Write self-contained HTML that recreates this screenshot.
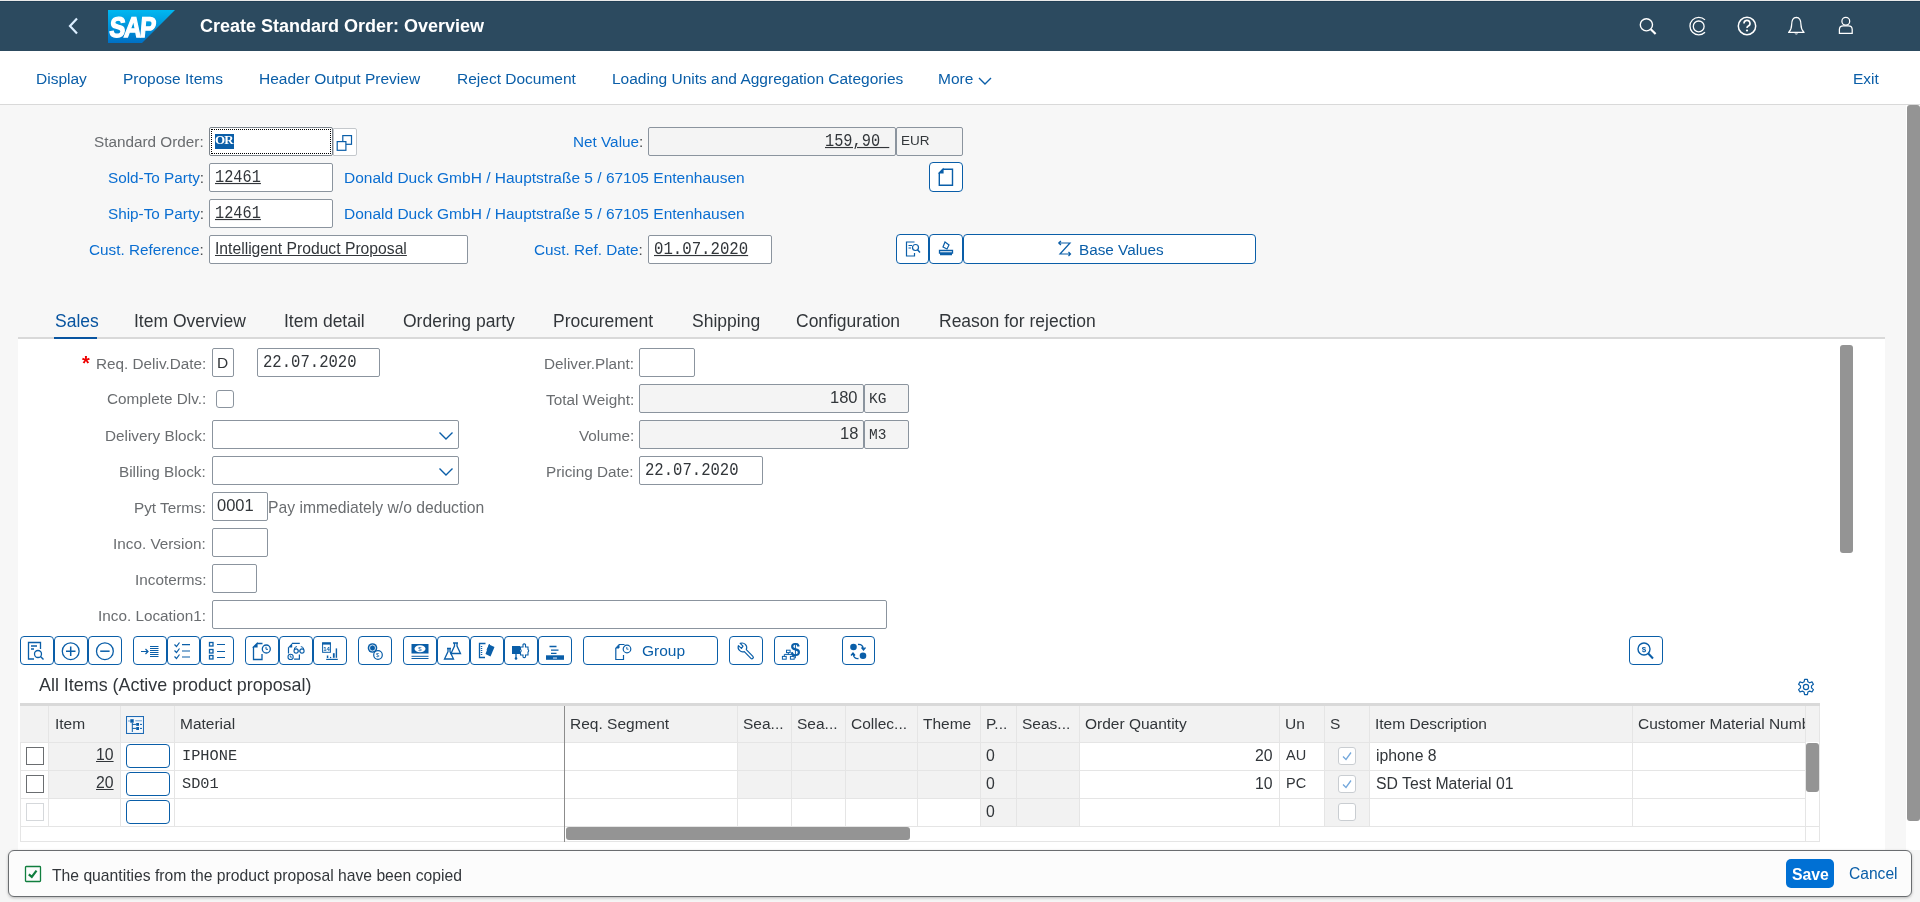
<!DOCTYPE html>
<html><head><meta charset="utf-8">
<style>
*{box-sizing:border-box;margin:0;padding:0}
html,body{width:1920px;height:902px;overflow:hidden;background:#f7f7f7;font-family:"Liberation Sans",sans-serif;color:#32363a}
.a{position:absolute}
#hdr{left:0;top:0;width:1920px;height:51px;background:#2c4a5f;border-top:1px solid #eaeaea;box-shadow:inset 0 1px 0 #223f55}
#title{left:200px;top:16px;font-size:18px;font-weight:bold;color:#fff;white-space:nowrap}
#menu{left:0;top:51px;width:1920px;height:54px;background:#fff;border-bottom:1px solid #d9d9d9}
.mi{top:70px;font-size:15.5px;color:#0a5ea8;white-space:nowrap}
.lbl{font-size:15.3px;white-space:nowrap;text-align:right}
.g{color:#6a6d70}
.bl{color:#0a6ed1}
.inp{background:#fff;border:1px solid #8b949e;border-radius:2px}
.ro{background:#f4f4f4}
.mono{font-family:"Liberation Mono",monospace;transform:scaleY(1.14);transform-origin:0 0}
.btn{background:#fff;border:1px solid #0a5ea8;border-radius:4px}
.tab{top:311px;font-size:17.5px;color:#32363a;white-space:nowrap}
.txt{white-space:nowrap}
.th{top:715px;font-size:15.5px;color:#32363a;white-space:nowrap}
.td{font-size:15.8px;color:#32363a;white-space:nowrap}
.cb{width:18px;height:18px;background:#fff;border:1px solid #6a6d70}
.scb{width:18px;height:18px;background:#fff;border:1px solid #c9cdd1;border-radius:3px}
.binp{width:44px;height:24px;background:#fff;border:1.5px solid #0a5ea8;border-radius:4px}
.a{will-change:transform}</style></head><body>
<!-- header -->
<div id="hdr" class="a"></div>
<svg class="a" style="left:66px;top:17px" width="16" height="18" viewBox="0 0 16 18"><path d="M11 1.5 L4 9 L11 16.5" fill="none" stroke="#dbeeff" stroke-width="2.2"/></svg>
<svg class="a" style="left:108px;top:10px" width="67" height="33" viewBox="0 0 67 33">
<defs><linearGradient id="sapg" x1="0" y1="0" x2="0" y2="1"><stop offset="0" stop-color="#00b8f1"/><stop offset="1" stop-color="#0070c4"/></linearGradient></defs>
<path d="M0 0 H67 L34 33 H0 Z" fill="url(#sapg)"/>
<g transform="translate(0.8,26.8) scale(0.84,1) skewX(-6)"><text x="0" y="0" font-family="Liberation Sans" font-weight="bold" font-size="28.5" fill="#fff" stroke="#fff" stroke-width="1.3" letter-spacing="-1.6">SAP</text></g>
</svg>
<div id="title" class="a">Create Standard Order: Overview</div>
<!-- shell icons -->
<svg class="a" style="left:1637px;top:16px" width="24" height="22" viewBox="0 0 24 22"><circle cx="9.4" cy="8.8" r="6.1" fill="none" stroke="#fff" stroke-width="1.4"/><path d="M13.8 13.2 L18.6 18" stroke="#fff" stroke-width="2.2"/></svg>
<svg class="a" style="left:1686px;top:15px" width="24" height="22" viewBox="0 0 24 22"><path d="M19 4.9 A8.8 8.8 0 1 0 19 17.3" fill="none" stroke="#fff" stroke-width="1.3"/><circle cx="12.7" cy="11.4" r="5.4" fill="none" stroke="#fff" stroke-width="1.3"/></svg>
<svg class="a" style="left:1736px;top:15px" width="22" height="22" viewBox="0 0 22 22"><circle cx="11" cy="11" r="8.7" fill="none" stroke="#fff" stroke-width="1.5"/><path d="M8 8.5 A3 3 0 1 1 12 11.2 Q11 11.8 11 13" fill="none" stroke="#fff" stroke-width="1.6"/><circle cx="11" cy="15.5" r="1.1" fill="#fff"/></svg>
<svg class="a" style="left:1785px;top:15px" width="22" height="22" viewBox="0 0 22 22"><path d="M3.6 17.4 Q6.6 14.5 6.6 10 Q6.6 2.6 11.3 2.4 Q16 2.6 16 10 Q16 14.5 19.1 17.4 Z" fill="none" stroke="#fff" stroke-width="1.25" stroke-linejoin="round"/><path d="M9.4 18.4 Q11.3 20.6 13.2 18.4 Z" fill="#fff"/></svg>
<svg class="a" style="left:1835px;top:15px" width="22" height="22" viewBox="0 0 22 22"><circle cx="10.8" cy="6.2" r="3.9" fill="none" stroke="#fff" stroke-width="1.25"/><path d="M4.4 18.3 V14.6 Q4.4 10.9 8.2 10.9 H13.4 Q17.2 10.9 17.2 14.6 V18.3 Z" fill="none" stroke="#fff" stroke-width="1.25"/></svg>

<!-- menu -->
<div id="menu" class="a"></div>
<div class="a mi" style="left:36px">Display</div>
<div class="a mi" style="left:123px">Propose Items</div>
<div class="a mi" style="left:259px">Header Output Preview</div>
<div class="a mi" style="left:457px">Reject Document</div>
<div class="a mi" style="left:612px">Loading Units and Aggregation Categories</div>
<div class="a mi" style="left:938px">More</div>
<svg class="a" style="left:977px;top:75px" width="16" height="12" viewBox="0 0 16 12"><path d="M2 3 L8 9 L14 3" fill="none" stroke="#0a5ea8" stroke-width="1.4"/></svg>
<div class="a mi" style="left:1853px">Exit</div>

<!-- header form -->
<div class="a lbl g" style="right:1716px;top:133px">Standard Order:</div>
<div class="a inp" style="left:209px;top:127px;width:124px;height:29px;border-color:#7c848c"></div>
<div class="a" style="left:211px;top:129px;width:120px;height:25px;border:1px dotted #000"></div>
<div class="a" style="left:215px;top:134px;width:19px;height:15px;background:#0a5ea8"></div>
<div class="a txt" style="left:215px;top:132px;font-size:13px;color:#fff;font-family:'Liberation Serif',serif;font-weight:bold;letter-spacing:-0.8px">OR</div>
<div class="a inp" style="left:333px;top:128px;width:24px;height:28px;border-color:#c4c8cc;border-radius:0 2px 2px 0"></div>
<svg class="a" style="left:336px;top:133px" width="18" height="18" viewBox="0 0 18 18"><rect x="6.8" y="2.6" width="8.7" height="8.7" fill="none" stroke="#0a5ea8" stroke-width="1.2"/><rect x="1.2" y="8.6" width="8.7" height="8.7" fill="#fff" stroke="#0a5ea8" stroke-width="1.2"/></svg>

<div class="a lbl bl" style="right:1716px;top:169px">Sold-To Party<span style="color:#4a4d50">:</span></div>
<div class="a inp" style="left:209px;top:163px;width:124px;height:29px"></div>
<div class="a mono txt" style="left:215px;top:167px;font-size:15.3px;text-decoration:underline;color:#32363a">12461</div>
<div class="a txt bl" style="left:344px;top:169px;font-size:15.5px">Donald Duck GmbH / Hauptstraße 5 / 67105 Entenhausen</div>
<div class="a lbl bl" style="right:1716px;top:205px">Ship-To Party<span style="color:#4a4d50">:</span></div>
<div class="a inp" style="left:209px;top:199px;width:124px;height:29px"></div>
<div class="a mono txt" style="left:215px;top:203px;font-size:15.3px;text-decoration:underline;color:#32363a">12461</div>
<div class="a txt bl" style="left:344px;top:205px;font-size:15.5px">Donald Duck GmbH / Hauptstraße 5 / 67105 Entenhausen</div>
<div class="a lbl bl" style="right:1716px;top:241px">Cust. Reference<span style="color:#4a4d50">:</span></div>
<div class="a inp" style="left:209px;top:235px;width:259px;height:29px"></div>
<div class="a txt" style="left:215px;top:240px;font-size:15.7px;text-decoration:underline;color:#32363a">Intelligent Product Proposal</div>

<div class="a lbl bl" style="right:1277px;top:133px">Net Value<span style="color:#4a4d50">:</span></div>
<div class="a inp ro" style="left:648px;top:127px;width:248px;height:29px"></div>
<div class="a mono txt" style="right:1031px;top:131px;font-size:15.3px;text-decoration:underline;color:#32363a">159,90&nbsp;</div>
<div class="a inp ro" style="left:896px;top:127px;width:67px;height:29px"></div>
<div class="a txt" style="left:901px;top:133px;font-size:13.5px;color:#32363a">EUR</div>
<div class="a btn" style="left:929px;top:162px;width:34px;height:30px"></div>
<svg class="a" style="left:936px;top:166px" width="20" height="22" viewBox="0 0 20 22"><path d="M7 3.2 H16.5 V19.3 H3.3 V7 Z" fill="none" stroke="#0a5ea8" stroke-width="1.4"/><path d="M3.3 7 L7 3.2 V7 Z" fill="#0a5ea8" stroke="#0a5ea8" stroke-width="1.2"/></svg>

<div class="a lbl bl" style="right:1277px;top:241px">Cust. Ref. Date<span style="color:#4a4d50">:</span></div>
<div class="a inp" style="left:648px;top:235px;width:124px;height:29px"></div>
<div class="a mono txt" style="left:653.5px;top:239px;font-size:15.7px;text-decoration:underline;color:#32363a">01.07.2020</div>
<div class="a btn" style="left:896px;top:234px;width:33px;height:30px"></div>
<svg class="a" style="left:902px;top:239px" width="22" height="20" viewBox="0 0 22 20"><path d="M12.5 3 H4.5 V17 H12.5 V14" fill="none" stroke="#0a5ea8" stroke-width="1.2"/><path d="M6.5 6.5 H10 M6.5 9 H9" stroke="#0a5ea8" stroke-width="1.2"/><circle cx="13.5" cy="8.5" r="3" fill="none" stroke="#0a5ea8" stroke-width="1.2"/><path d="M15.5 10.8 L18 13.5" stroke="#0a5ea8" stroke-width="1.4"/></svg>
<div class="a btn" style="left:929px;top:234px;width:34px;height:30px"></div>
<svg class="a" style="left:936px;top:239px" width="20" height="20" viewBox="0 0 20 20"><path d="M9 3 L13 6 L11 10 L7 8 Z" fill="none" stroke="#0a5ea8" stroke-width="1.2"/><path d="M3.5 11.5 H16.5 V14 H3.5 Z M4 15.5 H16" fill="none" stroke="#0a5ea8" stroke-width="1.3"/></svg>
<div class="a btn" style="left:963px;top:234px;width:293px;height:30px"></div>
<svg class="a" style="left:1057px;top:240px" width="16" height="18" viewBox="0 0 16 18"><path d="M1.5 3 L4 1 M1.5 3 L4 5 M1.5 3 H13 L3 14 H13.5 M11.5 12 L13.5 14 L11.5 16" fill="none" stroke="#0a5ea8" stroke-width="1.2"/></svg>
<div class="a txt" style="left:1078.5px;top:241px;font-size:15.3px;color:#0a5ea8">Base Values</div>

<!-- outer scrollbar -->
<div class="a" style="left:1906px;top:105px;width:14px;height:745px;background:#fff"></div>
<div class="a" style="left:1907px;top:105px;width:13px;height:716px;background:#949494;border-radius:3px 3px 3px 3px"></div>
<!-- tabs -->
<div class="a" style="left:18px;top:337px;width:1867px;height:2px;background:#d9d9d9"></div>
<div class="a" style="left:54px;top:337px;width:43px;height:2px;background:#0854a0"></div>
<div class="a tab" style="left:54.7px;color:#0854a0">Sales</div>
<div class="a tab" style="left:133.9px">Item Overview</div>
<div class="a tab" style="left:283.8px">Item detail</div>
<div class="a tab" style="left:403.2px">Ordering party</div>
<div class="a tab" style="left:553.3px">Procurement</div>
<div class="a tab" style="left:691.5px">Shipping</div>
<div class="a tab" style="left:796.2px">Configuration</div>
<div class="a tab" style="left:938.9px">Reason for rejection</div>
<!-- panel -->
<div class="a" style="left:18px;top:339px;width:1867px;height:511px;background:#fff"></div>
<!-- inner scrollbar -->
<div class="a" style="left:1840px;top:345px;width:13px;height:208px;background:#949494;border-radius:3px"></div>

<!-- sales form left -->
<div class="a txt" style="left:82px;top:352px;font-size:20px;color:#e00;font-weight:bold">*</div>
<div class="a lbl g" style="right:1714px;top:355px">Req. Deliv.Date:</div>
<div class="a inp" style="left:212px;top:348px;width:22px;height:29px"></div>
<div class="a txt" style="left:217px;top:354px;font-size:15.5px;color:#32363a">D</div>
<div class="a inp" style="left:257px;top:348px;width:123px;height:29px"></div>
<div class="a mono txt" style="left:262.5px;top:352px;font-size:15.6px;color:#32363a">22.07.2020</div>
<div class="a lbl g" style="right:1714px;top:390px">Complete Dlv.:</div>
<div class="a inp" style="left:216px;top:390px;width:18px;height:18px;border-radius:3px"></div>
<div class="a lbl g" style="right:1714px;top:427px">Delivery Block:</div>
<div class="a inp" style="left:212px;top:420px;width:247px;height:29px"></div>
<svg class="a" style="left:438px;top:431px" width="16" height="10" viewBox="0 0 16 10"><path d="M1.5 1.5 L8 8 L14.5 1.5" fill="none" stroke="#0a5ea8" stroke-width="1.4"/></svg>
<div class="a lbl g" style="right:1714px;top:463px">Billing Block:</div>
<div class="a inp" style="left:212px;top:456px;width:247px;height:29px"></div>
<svg class="a" style="left:438px;top:467px" width="16" height="10" viewBox="0 0 16 10"><path d="M1.5 1.5 L8 8 L14.5 1.5" fill="none" stroke="#0a5ea8" stroke-width="1.4"/></svg>
<div class="a lbl g" style="right:1714px;top:499px">Pyt Terms:</div>
<div class="a inp" style="left:212px;top:492px;width:56px;height:29px"></div>
<div class="a txt" style="left:217px;top:496px;font-size:16.5px;color:#32363a">0001</div>
<div class="a txt g" style="left:268px;top:499px;font-size:15.7px">Pay immediately w/o deduction</div>
<div class="a lbl g" style="right:1714px;top:535px">Inco. Version:</div>
<div class="a inp" style="left:212px;top:528px;width:56px;height:29px"></div>
<div class="a lbl g" style="right:1714px;top:571px">Incoterms:</div>
<div class="a inp" style="left:212px;top:564px;width:45px;height:29px"></div>
<div class="a lbl g" style="right:1714px;top:607px">Inco. Location1:</div>
<div class="a inp" style="left:212px;top:600px;width:675px;height:29px"></div>

<!-- sales form right -->
<div class="a lbl g" style="right:1286px;top:355px">Deliver.Plant:</div>
<div class="a inp" style="left:639px;top:348px;width:56px;height:29px"></div>
<div class="a lbl g" style="right:1286px;top:391px">Total Weight:</div>
<div class="a inp ro" style="left:639px;top:384px;width:225px;height:29px"></div>
<div class="a txt" style="right:1062px;top:388px;font-size:16.5px;color:#32363a">180</div>
<div class="a inp ro" style="left:864px;top:384px;width:45px;height:29px"></div>
<div class="a txt" style="left:869px;top:391px;font-size:14.5px;color:#32363a;font-family:'Liberation Mono',monospace">KG</div>
<div class="a lbl g" style="right:1286px;top:427px">Volume:</div>
<div class="a inp ro" style="left:639px;top:420px;width:225px;height:29px"></div>
<div class="a txt" style="right:1062px;top:424px;font-size:16.5px;color:#32363a">18</div>
<div class="a inp ro" style="left:864px;top:420px;width:45px;height:29px"></div>
<div class="a txt" style="left:869px;top:427px;font-size:14.5px;color:#32363a;font-family:'Liberation Mono',monospace">M3</div>
<div class="a lbl g" style="right:1286px;top:463px">Pricing Date:</div>
<div class="a inp" style="left:639px;top:456px;width:124px;height:29px"></div>
<div class="a mono txt" style="left:644.5px;top:460px;font-size:15.6px;color:#32363a">22.07.2020</div>

<!-- toolbar -->
<div class="a btn" style="left:20px;top:636px;width:34px;height:29px"></div>
<svg class="a" style="left:20px;top:636px" width="34" height="29" viewBox="0 0 34 29"><path d="M20.5 13 V6.5 H8.5 V23 H14" fill="none" stroke="#0a5ea8" stroke-width="1.3"/><path d="M11 10 H17 M11 13 H14" stroke="#0a5ea8" stroke-width="1.3"/><circle cx="18" cy="18" r="3.5" fill="none" stroke="#0a5ea8" stroke-width="1.3"/><path d="M20.5 20.5 L23.5 23.5" stroke="#0a5ea8" stroke-width="1.4"/></svg>
<div class="a btn" style="left:54px;top:636px;width:34px;height:29px"></div>
<svg class="a" style="left:54px;top:636px" width="34" height="29" viewBox="0 0 34 29"><circle cx="16.7" cy="15.2" r="8.4" fill="none" stroke="#0a5ea8" stroke-width="1.3"/><path d="M16.7 10.5 V20 M12 15.2 H21.5" stroke="#0a5ea8" stroke-width="1.5"/></svg>
<div class="a btn" style="left:88px;top:636px;width:34px;height:29px"></div>
<svg class="a" style="left:88px;top:636px" width="34" height="29" viewBox="0 0 34 29"><circle cx="16.9" cy="15.2" r="8.4" fill="none" stroke="#0a5ea8" stroke-width="1.3"/><path d="M12.2 15.2 H21.6" stroke="#0a5ea8" stroke-width="1.5"/></svg>

<div class="a btn" style="left:133px;top:636px;width:34px;height:29px"></div>
<svg class="a" style="left:133px;top:636px" width="34" height="29" viewBox="0 0 34 29"><path d="M8 15.5 H15 M12.5 13 L15 15.5 L12.5 18" fill="none" stroke="#0a5ea8" stroke-width="1.2"/><path d="M17 10.5 H25.5 M17 12.5 H25.5 M17 14.5 H25.5 M17 16.5 H25.5 M17 18.5 H25.5 M17 20.5 H25.5" stroke="#0a5ea8" stroke-width="1.1"/></svg>
<div class="a btn" style="left:167px;top:636px;width:33px;height:29px"></div>
<svg class="a" style="left:167px;top:636px" width="33" height="29" viewBox="0 0 33 29"><path d="M7.5 8.5 L9.5 10.5 L12.5 6.5 M7.5 14.5 L9.5 16.5 L12.5 12.5 M7.5 20.5 L9.5 22.5 L12.5 18.5" fill="none" stroke="#0a5ea8" stroke-width="1.2"/><path d="M15 8.7 H23 M15 15 H23 M15 21 H23" stroke="#0a5ea8" stroke-width="1.2"/></svg>
<div class="a btn" style="left:200px;top:636px;width:34px;height:29px"></div>
<svg class="a" style="left:200px;top:636px" width="34" height="29" viewBox="0 0 34 29"><rect x="9.5" y="6.5" width="3.5" height="3.5" fill="none" stroke="#0a5ea8" stroke-width="1.3"/><rect x="9.5" y="13.5" width="3.5" height="3.5" fill="none" stroke="#0a5ea8" stroke-width="1.3"/><rect x="9.5" y="19.5" width="3.5" height="3.5" fill="none" stroke="#0a5ea8" stroke-width="1.3"/><path d="M17 8.5 H25 M17 15.5 H25 M17 21.5 H25" stroke="#0a5ea8" stroke-width="1.2"/></svg>

<div class="a btn" style="left:245px;top:636px;width:34px;height:29px"></div>
<svg class="a" style="left:245px;top:636px" width="34" height="29" viewBox="0 0 34 29"><path d="M12 7.5 H17.5 M8.5 11 V23.5 H17 V18" fill="none" stroke="#0a5ea8" stroke-width="1.3"/><path d="M8.5 11 L12 7.5 V11 Z" fill="#0a5ea8" stroke="#0a5ea8" stroke-width="1.2"/><circle cx="21.3" cy="13" r="4" fill="none" stroke="#0a5ea8" stroke-width="1.3"/><path d="M21 10.8 V13.3 H23" fill="none" stroke="#0a5ea8" stroke-width="1"/></svg>
<div class="a btn" style="left:279px;top:636px;width:34px;height:29px"></div>
<svg class="a" style="left:279px;top:636px" width="34" height="29" viewBox="0 0 34 29"><path d="M13 7.4 H20.8 M9.5 11.2 V17.6 M20.4 18.4 V23.2 H15.1" fill="none" stroke="#0a5ea8" stroke-width="1.2"/><path d="M9 11.6 L13.2 7 V11.6 Z" fill="#0a5ea8"/><circle cx="17.1" cy="15" r="2.1" fill="none" stroke="#0a5ea8" stroke-width="1.1"/><circle cx="23" cy="15" r="2.1" fill="none" stroke="#0a5ea8" stroke-width="1.1"/><path d="M19.2 15 H20.9 M15.2 13.2 Q15.6 10.6 18 10.6 M21.8 10.6 Q24.3 10.6 24.8 13.2" fill="none" stroke="#0a5ea8" stroke-width="1"/><circle cx="11.6" cy="20.9" r="2.6" fill="none" stroke="#0a5ea8" stroke-width="1.1"/><path d="M11.3 19.4 V21.1 H12.9" fill="none" stroke="#0a5ea8" stroke-width="0.9"/></svg>
<div class="a btn" style="left:313px;top:636px;width:34px;height:29px"></div>
<svg class="a" style="left:313px;top:636px" width="34" height="29" viewBox="0 0 34 29"><rect x="9.6" y="7" width="7.8" height="9.3" fill="none" stroke="#0a5ea8" stroke-width="1"/><rect x="9.1" y="6.4" width="8.8" height="2.2" fill="#0a5ea8"/><text x="10.2" y="14.8" font-family="Liberation Sans" font-size="6" font-weight="bold" fill="#0a5ea8">14</text><path d="M13.2 23.4 H24.8" stroke="#0a5ea8" stroke-width="1.2"/><rect x="13.8" y="19.5" width="1.5" height="2.5" fill="#0a5ea8"/><circle cx="17.6" cy="21.5" r="0.7" fill="#0a5ea8"/><rect x="19.9" y="17.2" width="1.8" height="4.6" fill="#0a5ea8"/><rect x="22.7" y="12.4" width="1.4" height="9.4" fill="#0a5ea8"/></svg>
<div class="a btn" style="left:358px;top:636px;width:34px;height:29px"></div>
<svg class="a" style="left:358px;top:636px" width="34" height="29" viewBox="0 0 34 29"><circle cx="14.5" cy="12" r="4.8" fill="#0a5ea8"/><circle cx="14.5" cy="12" r="3" fill="none" stroke="#fff" stroke-width="0.8"/><circle cx="20" cy="19" r="4.3" fill="#fff" stroke="#0a5ea8" stroke-width="1.2"/><text x="18.1" y="21.3" font-family="Liberation Sans" font-size="6" fill="#0a5ea8">$</text></svg>

<div class="a btn" style="left:403px;top:636px;width:34px;height:29px"></div>
<svg class="a" style="left:403px;top:636px" width="34" height="29" viewBox="0 0 34 29"><rect x="8.5" y="8" width="17" height="9.5" fill="#0a5ea8"/><ellipse cx="17" cy="12.7" rx="5.5" ry="3.5" fill="#fff"/><text x="15.3" y="15" font-family="Liberation Sans" font-size="6" fill="#0a5ea8">$</text><path d="M8.5 20.3 H25.5 M8.5 22.5 H25.5" stroke="#0a5ea8" stroke-width="1"/></svg>
<div class="a btn" style="left:437px;top:636px;width:33px;height:29px"></div>
<svg class="a" style="left:437px;top:636px" width="33" height="29" viewBox="0 0 33 29"><path d="M10 12.5 H14 M11 12.5 V15.5 L7.5 23 H16.5 L13 15.5 V12.5" fill="none" stroke="#0a5ea8" stroke-width="1.3"/><path d="M16 7 H21 M17.5 7 V10 L14 17.5 H23.5 L20 10 V7" fill="none" stroke="#0a5ea8" stroke-width="1.3"/></svg>
<div class="a btn" style="left:470px;top:636px;width:34px;height:29px"></div>
<svg class="a" style="left:470px;top:636px" width="34" height="29" viewBox="0 0 34 29"><path d="M15.5 7.5 H9.5 V21.5 H15" fill="none" stroke="#0a5ea8" stroke-width="1.3"/><path d="M11.5 10 V19" stroke="#0a5ea8" stroke-width="1.5" stroke-dasharray="1 1"/><path d="M19 8.5 L24.5 11 L20.5 20.5 L15.5 18 Z" fill="#0a5ea8"/><path d="M17 14 L19.5 8" stroke="#0a5ea8" stroke-width="1"/></svg>
<div class="a btn" style="left:504px;top:636px;width:34px;height:29px"></div>
<svg class="a" style="left:504px;top:636px" width="34" height="29" viewBox="0 0 34 29"><rect x="8" y="10" width="8" height="8" fill="#0a5ea8"/><path d="M12 18 V22" stroke="#0a5ea8" stroke-width="1.3"/><circle cx="12" cy="22.5" r="1.3" fill="#0a5ea8"/><path d="M16.5 11 H19 V8.5 A1.5 1.5 0 0 1 21.5 8.5 V11 H24 V13.5 A1.5 1.5 0 0 1 24 16 V19 H21.5 V21 A1.5 1.5 0 0 1 19 21 V19 H16.5 V16 A1.5 1.5 0 0 0 16.5 13.5 Z" fill="none" stroke="#0a5ea8" stroke-width="1.1"/></svg>
<div class="a btn" style="left:538px;top:636px;width:34px;height:29px"></div>
<svg class="a" style="left:538px;top:636px" width="34" height="29" viewBox="0 0 34 29"><path d="M11.5 10.5 H18.5 M13 14.2 H20.5 M13 17.3 H18.5" stroke="#0a5ea8" stroke-width="1.3"/><rect x="8" y="19.3" width="18" height="4.5" fill="#0a5ea8"/><rect x="15" y="21.3" width="4" height="1.5" fill="#9bbce0"/></svg>

<div class="a btn" style="left:583px;top:636px;width:135px;height:29px"></div>
<svg class="a" style="left:612px;top:642px" width="22" height="22" viewBox="0 0 22 22"><path d="M7 2.5 H12.5 M3.8 6 V17.5 H11.5 V13" fill="none" stroke="#0a5ea8" stroke-width="1.2"/><path d="M3.8 6 L7 2.5 V6 Z" fill="#0a5ea8" stroke="#0a5ea8" stroke-width="1"/><circle cx="15" cy="7" r="3.8" fill="#fff" stroke="#0a5ea8" stroke-width="1.2"/><path d="M14.8 5 V7.2 H16.5" fill="none" stroke="#0a5ea8" stroke-width="0.9"/></svg>
<div class="a txt" style="left:642px;top:642px;font-size:15.5px;color:#0a5ea8">Group</div>
<div class="a btn" style="left:729px;top:636px;width:34px;height:29px"></div>
<svg class="a" style="left:729px;top:636px" width="34" height="29" viewBox="0 0 34 29"><path d="M11.2 7.4 L14 10.2 L12.4 12.4 L9.4 9.6 A4.7 4.7 0 0 0 15.3 15.6 L21.9 22.3 A1.4 1.4 0 0 0 23.9 20.3 L17.3 13.6 A4.7 4.7 0 0 0 11.2 7.4 Z" fill="none" stroke="#0a5ea8" stroke-width="1.2" stroke-linejoin="round"/></svg>
<div class="a btn" style="left:774px;top:636px;width:34px;height:29px"></div>
<svg class="a" style="left:774px;top:636px" width="34" height="29" viewBox="0 0 34 29"><text x="16.6" y="19.6" font-family="Liberation Sans" font-weight="bold" font-size="17.5" fill="#0a5ea8">$</text><rect x="12.5" y="14.2" width="3.6" height="2.4" fill="none" stroke="#0a5ea8" stroke-width="1"/><path d="M14.3 16.6 V18.4 M10.3 20.4 V18.4 H18.3 V20.4" fill="none" stroke="#0a5ea8" stroke-width="1"/><rect x="8.4" y="20.4" width="3.8" height="2.8" fill="none" stroke="#0a5ea8" stroke-width="1"/><rect x="16.4" y="20.4" width="3.8" height="2.8" fill="none" stroke="#0a5ea8" stroke-width="1"/></svg>
<div class="a btn" style="left:842px;top:636px;width:33px;height:29px"></div>
<svg class="a" style="left:842px;top:636px" width="33" height="29" viewBox="0 0 33 29"><circle cx="11.5" cy="11" r="3.3" fill="#0a5ea8"/><circle cx="21" cy="19.8" r="3.3" fill="#0a5ea8"/><path d="M16 8.5 Q21 8 21.5 13.5 M19.5 11.5 L21.5 14 L23.5 11.5" fill="none" stroke="#0a5ea8" stroke-width="1.3"/><path d="M16.5 22.5 Q11.5 23 11 17.5 M9 19.5 L11 17 L13 19.5" fill="none" stroke="#0a5ea8" stroke-width="1.3"/></svg>

<div class="a btn" style="left:1629px;top:636px;width:34px;height:29px"></div>
<svg class="a" style="left:1629px;top:636px" width="34" height="29" viewBox="0 0 34 29"><circle cx="15" cy="13" r="6" fill="none" stroke="#0a5ea8" stroke-width="1.4"/><text x="12.7" y="16" font-family="Liberation Sans" font-weight="bold" font-size="8" fill="#0a5ea8">$</text><path d="M19.3 17.5 L24 22.5" stroke="#0a5ea8" stroke-width="2"/></svg>
<div class="a txt" style="left:38.5px;top:675px;font-size:17.9px;color:#32363a">All Items (Active product proposal)</div>
<svg class="a" style="left:1796px;top:677px" width="20" height="20" viewBox="0 0 20 20"><path d="M8.6 1.8 H11.4 L11.9 4.2 L13.7 5.2 L16 4.3 L17.4 6.7 L15.5 8.3 V10.3 L17.4 12 L16 14.4 L13.7 13.5 L11.9 14.5 L11.4 17 H8.6 L8.1 14.5 L6.3 13.5 L4 14.4 L2.6 12 L4.5 10.3 V8.3 L2.6 6.7 L4 4.3 L6.3 5.2 L8.1 4.2 Z" fill="none" stroke="#0a5ea8" stroke-width="1.2" stroke-linejoin="round" transform="translate(0,0.6)"/><circle cx="10" cy="10" r="2.6" fill="none" stroke="#0a5ea8" stroke-width="1.2"/></svg>

<!-- table -->
<div class="a" style="left:20px;top:703px;width:1800px;height:3px;background:#d9d9d9"></div>
<div class="a" style="left:20px;top:706px;width:1800px;height:136px;background:#fff;border-left:1px solid #e5e5e5;border-bottom:1px solid #e5e5e5;border-right:1px solid #e5e5e5"></div>
<div class="a" style="left:20px;top:706px;width:1799px;height:36px;background:#f2f2f2"></div>
<!-- gray cells -->
<div class="a" style="left:48px;top:742px;width:72px;height:56px;background:#f2f2f2"></div>
<div class="a" style="left:737px;top:742px;width:243px;height:56px;background:#f2f2f2"></div>
<div class="a" style="left:980px;top:742px;width:99px;height:84px;background:#f2f2f2"></div>
<div class="a" style="left:1324px;top:742px;width:45px;height:84px;background:#f2f2f2"></div>
<!-- horizontal row lines -->
<div class="a" style="left:20px;top:742px;width:1785px;height:1px;background:#e5e5e5"></div>
<div class="a" style="left:20px;top:770px;width:1785px;height:1px;background:#e5e5e5"></div>
<div class="a" style="left:20px;top:798px;width:1785px;height:1px;background:#e5e5e5"></div>
<div class="a" style="left:20px;top:826px;width:1800px;height:1px;background:#e5e5e5"></div>
<!-- vertical col lines -->
<div class="a" style="left:48px;top:706px;width:1px;height:120px;background:#e5e5e5"></div>
<div class="a" style="left:120px;top:706px;width:1px;height:120px;background:#e5e5e5"></div>
<div class="a" style="left:174px;top:706px;width:1px;height:120px;background:#e5e5e5"></div>
<div class="a" style="left:564px;top:706px;width:1px;height:136px;background:#8c8c8c"></div>
<div class="a" style="left:737px;top:706px;width:1px;height:120px;background:#e5e5e5"></div>
<div class="a" style="left:791px;top:706px;width:1px;height:120px;background:#e5e5e5"></div>
<div class="a" style="left:845px;top:706px;width:1px;height:120px;background:#e5e5e5"></div>
<div class="a" style="left:917px;top:706px;width:1px;height:120px;background:#e5e5e5"></div>
<div class="a" style="left:980px;top:706px;width:1px;height:120px;background:#e5e5e5"></div>
<div class="a" style="left:1016px;top:706px;width:1px;height:120px;background:#e5e5e5"></div>
<div class="a" style="left:1079px;top:706px;width:1px;height:120px;background:#e5e5e5"></div>
<div class="a" style="left:1279px;top:706px;width:1px;height:120px;background:#e5e5e5"></div>
<div class="a" style="left:1324px;top:706px;width:1px;height:120px;background:#e5e5e5"></div>
<div class="a" style="left:1369px;top:706px;width:1px;height:120px;background:#e5e5e5"></div>
<div class="a" style="left:1632px;top:706px;width:1px;height:120px;background:#e5e5e5"></div>
<div class="a" style="left:1805px;top:706px;width:1px;height:136px;background:#e5e5e5"></div>
<!-- header texts -->
<div class="a th" style="left:54.7px">Item</div>
<svg class="a" style="left:126px;top:716px" width="18" height="18" viewBox="0 0 18 18"><rect x="0.5" y="0.5" width="17" height="17" fill="#f4f8fc" stroke="#1f6bb5" stroke-width="1.1"/><path d="M2 5 H4.5 M9.3 4.8 H16" stroke="#6a9fd2" stroke-width="1"/><rect x="4.3" y="3.2" width="3.4" height="3.5" fill="#0a5ea8"/><path d="M6.3 6.7 V16 M6.3 8.4 H10.2 M6.3 12.4 H10.2 M14 8.4 H16 M14 12.4 H16" fill="none" stroke="#0a5ea8" stroke-width="1"/><rect x="10.2" y="7" width="2.8" height="2.8" fill="#0a5ea8"/><rect x="10.2" y="11" width="2.8" height="3" fill="#0a5ea8"/></svg>
<div class="a th" style="left:180.4px">Material</div>
<div class="a th" style="left:570.3px">Req. Segment</div>
<div class="a th" style="left:743px">Sea...</div>
<div class="a th" style="left:797.2px">Sea...</div>
<div class="a th" style="left:851px">Collec...</div>
<div class="a th" style="left:923.4px">Theme</div>
<div class="a th" style="left:986px">P...</div>
<div class="a th" style="left:1022px">Seas...</div>
<div class="a th" style="left:1085px">Order Quantity</div>
<div class="a th" style="left:1285px">Un</div>
<div class="a th" style="left:1330px">S</div>
<div class="a th" style="left:1375.2px">Item Description</div>
<div class="a" style="left:1638px;top:706px;width:167px;height:36px;overflow:hidden"><div class="th" style="position:absolute;left:0;top:9px">Customer Material Number</div></div>
<!-- rows -->
<div class="a cb" style="left:26px;top:747px"></div>
<div class="a cb" style="left:26px;top:775px"></div>
<div class="a cb" style="left:26px;top:803px;border-color:#d5d8db"></div>
<div class="a td" style="right:1806px;top:745.5px;text-decoration:underline">10</div>
<div class="a td" style="right:1806px;top:773.5px;text-decoration:underline">20</div>
<div class="a binp" style="left:126px;top:744px"></div>
<div class="a binp" style="left:126px;top:772px"></div>
<div class="a binp" style="left:126px;top:800px"></div>
<div class="a txt" style="left:181.5px;top:747px;font-size:15.3px;color:#32363a;font-family:'Liberation Mono',monospace">IPHONE</div>
<div class="a txt" style="left:181.5px;top:775px;font-size:15.3px;color:#32363a;font-family:'Liberation Mono',monospace">SD01</div>
<div class="a td" style="left:986px;top:746.5px">0</div>
<div class="a td" style="left:986px;top:774.5px">0</div>
<div class="a td" style="left:986px;top:802.5px">0</div>
<div class="a td" style="right:647px;top:746.5px">20</div>
<div class="a td" style="right:647px;top:774.5px">10</div>
<div class="a txt" style="left:1286px;top:747px;font-size:14.5px;color:#32363a">AU</div>
<div class="a txt" style="left:1286px;top:775px;font-size:14.5px;color:#32363a">PC</div>
<div class="a scb" style="left:1338px;top:747px"></div>
<div class="a scb" style="left:1338px;top:775px"></div>
<div class="a scb" style="left:1338px;top:803px"></div>
<svg class="a" style="left:1338px;top:747px" width="18" height="18" viewBox="0 0 18 18"><path d="M5 9.5 L8 12.5 L13 5.5" fill="none" stroke="#74a8dc" stroke-width="1.3"/></svg>
<svg class="a" style="left:1338px;top:775px" width="18" height="18" viewBox="0 0 18 18"><path d="M5 9.5 L8 12.5 L13 5.5" fill="none" stroke="#74a8dc" stroke-width="1.3"/></svg>
<div class="a td" style="left:1376px;top:746.5px">iphone 8</div>
<div class="a td" style="left:1376px;top:774.5px">SD Test Material 01</div>
<!-- table scrollbars -->
<div class="a" style="left:566px;top:827px;width:344px;height:13px;background:#949494;border-radius:3px"></div>
<div class="a" style="left:1806px;top:743px;width:13px;height:49px;background:#949494;border-radius:3px"></div>

<!-- footer -->
<div class="a" style="left:0;top:850px;width:1920px;height:52px;background:#f5f5f5"></div>
<div class="a" style="left:8px;top:850px;width:1904px;height:47px;background:#fcfcfc;border:1px solid #6a6d70;border-radius:6px;box-shadow:0 1px 3px rgba(0,0,0,0.25)"></div>
<svg class="a" style="left:24px;top:865px" width="18" height="18" viewBox="0 0 18 18"><rect x="1.5" y="1.5" width="15" height="15" rx="0.8" fill="none" stroke="#107e3e" stroke-width="1.3"/><path d="M4.8 9.3 L7.8 11.8 L12.5 5.7" fill="none" stroke="#107e3e" stroke-width="2.2"/></svg>
<div class="a txt" style="left:52.3px;top:867px;font-size:15.7px;color:#32363a">The quantities from the product proposal have been copied</div>
<div class="a" style="left:1786px;top:859px;width:48px;height:29px;background:#0070d4;border-radius:5px"></div>
<div class="a txt" style="left:1792px;top:866px;font-size:15.8px;font-weight:bold;color:#fff">Save</div>
<div class="a txt" style="left:1848.5px;top:865px;font-size:15.6px;color:#0a5ea8">Cancel</div>

</body></html>
